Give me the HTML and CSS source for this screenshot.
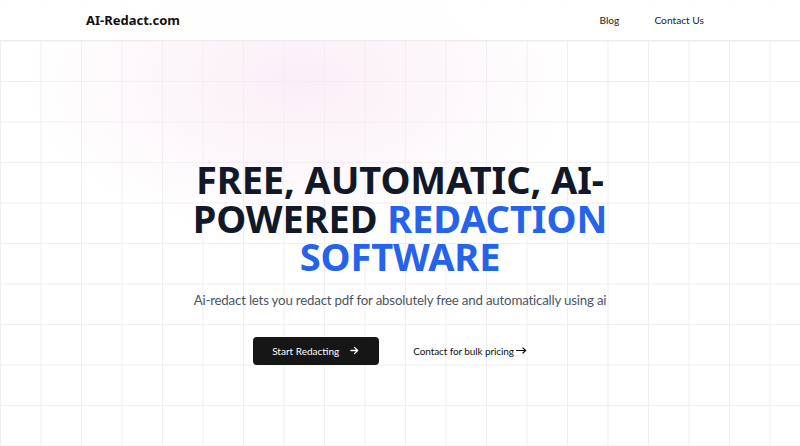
FILE: index.html
```html
<!DOCTYPE html>
<html lang="en">
<head>
<meta charset="utf-8">
<title>AI-Redact.com</title>
<link rel="stylesheet" href="styles.css">
</head>
<body>
<div class="page">
  <div class="glow"></div>
  <header class="header">
    <a class="logo" href="#">AI-Redact.com</a>
    <nav class="nav">
      <a href="#">Blog</a>
      <a href="#">Contact Us</a>
    </nav>
  </header>
  <main class="hero">
    <h1 class="title">FREE, AUTOMATIC, AI-<br>POWERED <span class="accent">REDACTION<br>SOFTWARE</span></h1>
    <p class="subtitle">Ai-redact lets you redact pdf for absolutely free and automatically using ai</p>
    <div class="actions">
      <a class="btn" href="#">Start Redacting
        <svg class="arrow" width="9" height="9" viewBox="0 0 10 10" aria-hidden="true"><path d="M1 5h7.5M5 1.5L8.5 5 5 8.5" fill="none" stroke="#fff" stroke-width="1.4" stroke-linecap="round" stroke-linejoin="round"/></svg>
      </a>
      <a class="link" href="#">Contact for bulk pricing
        <svg class="larrow" width="11" height="7" viewBox="0 0 11 7" aria-hidden="true"><path d="M0.5 3.5h9M7 1l2.6 2.5L7 6" fill="none" stroke="#111" stroke-width="1.2" stroke-linecap="round" stroke-linejoin="round"/></svg>
      </a>
    </div>
  </main>
</div>
</body>
</html>
```
FILE: styles.css
```css
* { box-sizing: border-box; }
html, body { margin: 0; padding: 0; }
body {
  font-family: "Lato", "Noto Sans", sans-serif;
  color: #111827;
  background: #fff;
}
a { text-decoration: none; color: inherit; }
.page {
  position: relative;
  width: 800px;
  height: 446px;
  overflow: hidden;
  background-color: #fff;
  background-image:
    linear-gradient(to right, #efeff1 1px, transparent 1px),
    linear-gradient(to bottom, #efeff1 1px, transparent 1px);
  background-size: 40.5px 40.5px;
}
.glow {
  position: absolute;
  left: 20px;
  top: -80px;
  width: 560px;
  height: 320px;
  border-radius: 50%;
  background: radial-gradient(ellipse at 50% 50%, rgba(250, 232, 244, 0.7) 0%, rgba(250, 236, 246, 0.45) 35%, rgba(255, 255, 255, 0) 70%);
  pointer-events: none;
}
.header {
  position: relative;
  height: 41px;
  display: flex;
  align-items: center;
  justify-content: space-between;
  padding: 0 96px 0 86px;
  background: rgba(255, 255, 255, 0.85);
  border-bottom: 1px solid #ececee;
}
.logo {
  font-family: "Noto Sans", sans-serif;
  font-weight: 700;
  font-size: 13px;
  color: #111;
}
.nav {
  display: flex;
  gap: 35px;
  font-size: 10.2px;
  color: #222;
}
.hero {
  position: relative;
  display: flex;
  flex-direction: column;
  align-items: center;
  text-align: center;
  padding-top: 119px;
}
.title {
  margin: 0;
  font-family: "Noto Sans", sans-serif;
  font-size: 38px;
  line-height: 38.5px;
  font-weight: 700;
  color: #111827;
  letter-spacing: -0.1px;
}
.accent { color: #2563eb; }
.subtitle {
  margin: 16px 0 0;
  font-size: 13.3px;
  letter-spacing: -0.2px;
  color: #4b5563;
}
.actions {
  display: flex;
  align-items: center;
  gap: 34px;
  margin-top: 29px;
  margin-right: 20px;
}
.btn {
  display: flex;
  align-items: center;
  gap: 11px;
  height: 28px;
  padding: 0 20px 0 19px;
  background: #161616;
  color: #fff;
  border-radius: 4px;
  font-size: 10px;
}
.link {
  display: flex;
  align-items: center;
  gap: 2px;
  font-size: 10px;
  letter-spacing: -0.1px;
  color: #111;
}
```
